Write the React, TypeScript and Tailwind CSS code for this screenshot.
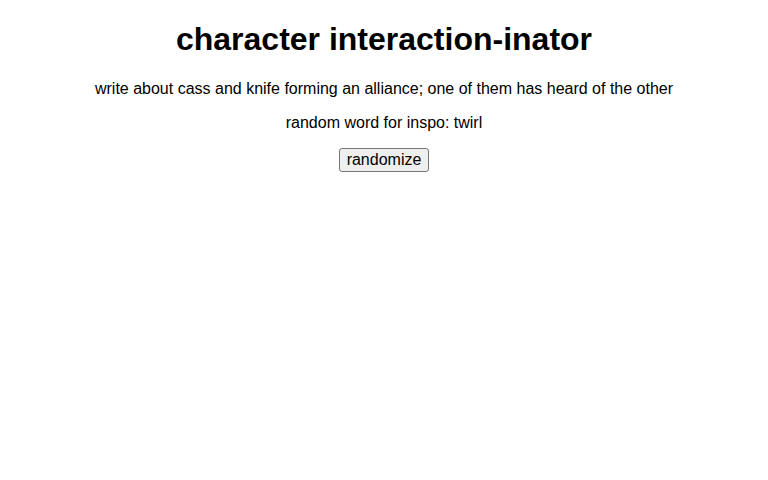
export default function App() {
  return (
    <div
      className="min-h-screen bg-white text-center text-black"
      style={{ fontFamily: '"Liberation Sans", Arial, sans-serif' }}
    >
      <div className="pt-[21.44px]">
        <h1 className="text-[32px] font-bold leading-[36.8px]">character interaction-inator</h1>
        <p className="mt-[21.44px] text-[16px] leading-[18.4px]">
          write about cass and knife forming an alliance; one of them has heard of the other
        </p>
        <p className="mt-[16px] text-[16px] leading-[18.4px]">random word for inspo: twirl</p>
        <div className="mt-[16px]">
          <button
            type="button"
            className="h-[24px] rounded-[3px] border border-[#767676] bg-[#efefef] px-[7px] text-[16px] leading-[18px] text-black"
          >
            randomize
          </button>
        </div>
      </div>
    </div>
  );
}
